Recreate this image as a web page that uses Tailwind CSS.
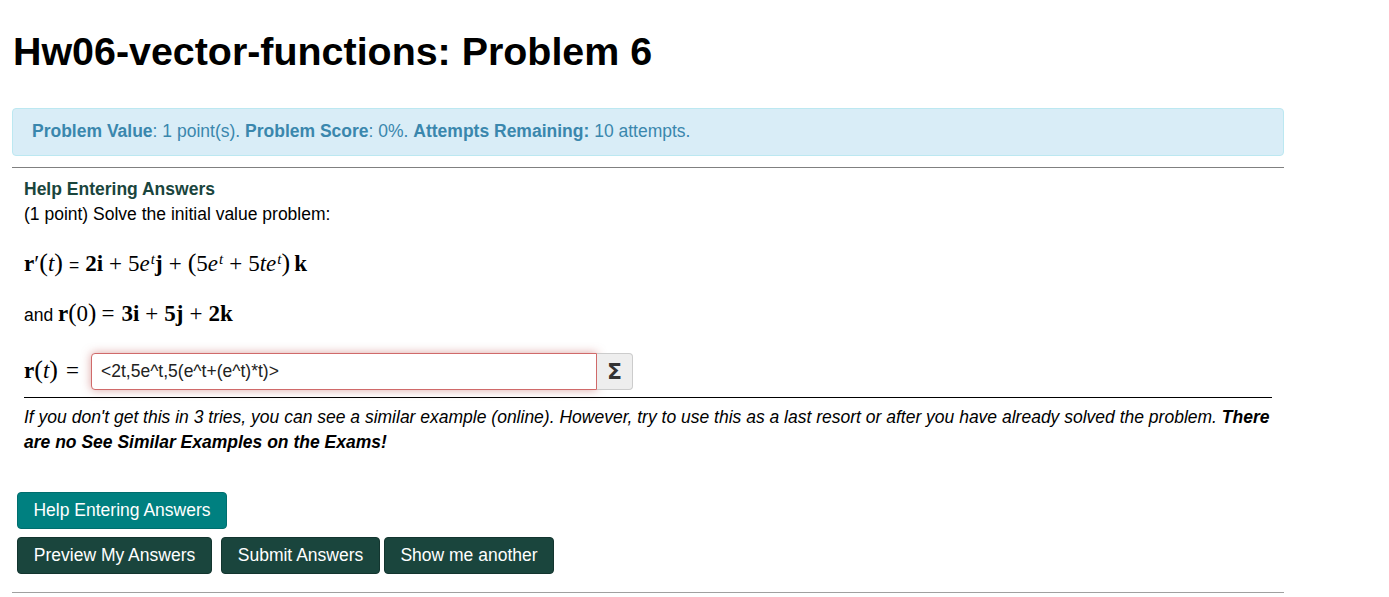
<!DOCTYPE html>
<html>
<head>
    <meta charset="UTF-8">
    <title>Hw06-vector-functions: Problem 6</title>
    <script src="https://cdn.jsdelivr.net/npm/@tailwindcss/browser@4"></script>
</head>
<body class="bg-white text-black font-['Liberation_Sans',Arial,sans-serif] text-[17.5px] leading-[25px] overflow-hidden">
    <div class="w-[1272px] ml-3">
        <h1 class="text-[39.4px] leading-[42px] font-bold pt-[30px] pl-px text-[#000]">Hw06-vector-functions: Problem 6</h1>

        <div class="mt-[36px] h-[48px] flex items-center pl-[19px] pb-[2px] bg-[#d9edf7] border border-[#bce8f1] rounded-[4px] text-[#3a87ad]">
            <p><b>Problem Value</b>: 1 point(s). <b>Problem Score</b>: 0%. <b>Attempts Remaining:</b> 10 attempts.</p>
        </div>

        <hr class="mt-[11px] border-t border-[#808080]">

        <div class="px-3 pt-[9px]">
            <p class="font-bold text-[#1a453d]">Help Entering Answers</p>
            <p>(1 point) Solve the initial value problem:</p>

            <p class="mt-[23px] h-[25px] flex items-baseline font-['Liberation_Serif',serif] text-[23px] whitespace-pre">
                <b>r</b><span>′</span><span class="text-[26px] leading-none">(</span><i>t</i><span class="text-[26px] leading-none">)</span>
                <span class="ml-[6px] font-['Liberation_Sans',sans-serif] text-[17.5px]">=</span>
                <b class="ml-[6px]">2i</b>
                <span class="ml-[6px]">+</span>
                <span class="ml-[6px]">5<i>e</i></span><sup class="text-[15px] italic -top-[7px] ml-px">t</sup><b>j</b>
                <span class="ml-[6px]">+</span>
                <span class="ml-[6px] text-[26px] leading-none">(</span><span>5<i>e</i></span><sup class="text-[15px] italic -top-[7px] ml-px">t</sup>
                <span class="ml-[6px]">+</span>
                <span class="ml-[6px]">5<i>te</i></span><sup class="text-[15px] italic -top-[7px] ml-px">t</sup><span class="text-[26px] leading-none">)</span>
                <b class="ml-[4px]">k</b>
            </p>

            <p class="mt-[25px] h-[25px] flex items-baseline font-['Liberation_Serif',serif] text-[23px] whitespace-pre">
                <span class="font-['Liberation_Sans',sans-serif] text-[17.5px]">and </span>
                <b>r</b><span class="text-[25px] leading-none">(</span><span>0</span><span class="text-[25px] leading-none">)</span>
                <span class="ml-[5px]">=</span>
                <b class="ml-[7px]">3i</b>
                <span class="ml-[6px]">+</span>
                <b class="ml-[6px]">5j</b>
                <span class="ml-[6px]">+</span>
                <b class="ml-[6px]">2k</b>
            </p>

            <div class="mt-[28px] flex items-center h-[37px]">
                <span class="font-['Liberation_Serif',serif] text-[23px] whitespace-pre w-[67px] flex items-baseline -mt-[4px]"><b>r</b><span class="text-[26px] leading-none">(</span><i>t</i><span class="text-[26px] leading-none">)</span><span class="ml-[8px]">=</span></span>
                <input type="text" value="<2t,5e^t,5(e^t+(e^t)*t)>" class="w-[506px] h-[37px] px-[9px] text-[17.5px] text-[#222] bg-white border border-[#d06a6a] rounded-l-[4px] shadow-[0_0_10px_rgba(185,74,72,0.5)] outline-none">
                <span class="w-[36px] h-[37px] flex items-center justify-center bg-[#eeeeee] border border-l-0 border-[#cccccc] rounded-r-[4px] text-[#333] text-[22px] font-bold font-['DejaVu_Sans',sans-serif]">Σ</span>
            </div>

            <hr class="mt-[7px] border-t border-black">

            <p class="italic mt-[7px]">If you don't get this in 3 tries, you can see a similar example (online). However, try to use this as a last resort or after you have already solved the problem. <b>There are no See Similar Examples on the Exams!</b></p>
        </div>

        <div class="pl-[5px] mt-[37px]">
            <button class="block h-[37px] w-[210px] bg-[#008080] border border-[#006e6e] rounded-[4px] text-white">Help Entering Answers</button>
            <div class="flex mt-2">
                <button class="h-[37px] w-[195px] bg-[#1a453d] border border-[#13352f] rounded-[4px] text-white">Preview My Answers</button>
                <button class="h-[37px] w-[159px] ml-[9px] bg-[#1a453d] border border-[#13352f] rounded-[4px] text-white">Submit Answers</button>
                <button class="h-[37px] w-[170px] ml-[4px] bg-[#1a453d] border border-[#13352f] rounded-[4px] text-white">Show me another</button>
            </div>
        </div>

        <hr class="mt-[18px] border-t border-[#a0a0a0]">
    </div>
</body>
</html>
